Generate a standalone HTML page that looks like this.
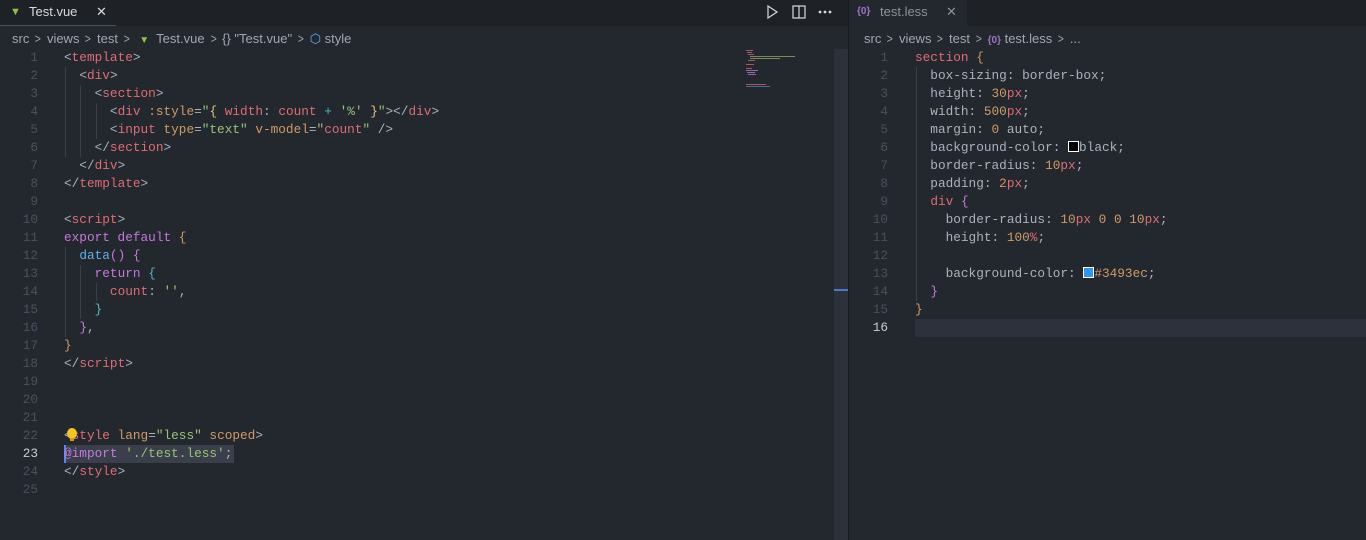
<!DOCTYPE html>
<html><head><meta charset="utf-8"><style>
*{margin:0;padding:0;box-sizing:border-box}
body{width:1366px;height:540px;background:#23272e;overflow:hidden;position:relative;font-family:"Liberation Sans",sans-serif}
.tabbar{position:absolute;top:0;height:26px;background:#1e2227}
.tab{position:absolute;top:0;height:26px;font-size:13px;line-height:24px;color:#d7dae0}
.bc{position:absolute;top:31px;font-size:13px;color:#a0a7b4;white-space:pre;line-height:16px}
.bc i{font-style:normal;display:inline-block;margin:0 5px;transform:scaleX(0.8)}
.code{position:absolute;font-family:"Liberation Mono",monospace;font-size:12.75px;line-height:18px;white-space:pre;color:#abb2bf}
.ln{position:absolute;font-family:"Liberation Mono",monospace;font-size:12.75px;line-height:18px;color:#495162;text-align:right;white-space:pre}
.r{color:#e06c75}.o{color:#d19a66}.g{color:#98c379}.p{color:#c678dd}.b{color:#61afef}.c{color:#56b6c2}.y{color:#e5c07b}.w{color:#abb2bf}
.guide{position:absolute;width:1px;background:#3b4048}
</style></head><body>
<div class="tabbar" style="left:0;width:848px"></div>
<div class="tabbar" style="left:849px;width:517px"></div>
<div class="tab" style="left:0;width:116px;border-bottom:1px solid #4b5263;background:#1e2227">
 <span style="position:absolute;left:10px;top:0;color:#8dc149;font-size:11px">▼</span>
 <span style="position:absolute;left:29px">Test.vue</span>
 <span style="position:absolute;left:96px;color:#d7dae0">✕</span>
</div>
<svg style="position:absolute;left:766px;top:4px" width="70" height="16" viewBox="0 0 70 16" fill="none" stroke="#d7dae0" stroke-width="1.2">
 <path d="M2 2 L11 8 L2 14 Z"/>
 <rect x="27" y="2" width="12" height="12"/><path d="M33 2 V14"/>
 <circle cx="54" cy="8" r=".8" fill="#d7dae0"/><circle cx="59" cy="8" r=".8" fill="#d7dae0"/><circle cx="64" cy="8" r=".8" fill="#d7dae0"/>
</svg>
<div class="tab" style="left:849px;width:118px;background:#23272e;color:#8b919c">
 <span style="position:absolute;left:8px;color:#a074c4;font-size:10px;font-weight:bold">{0}</span>
 <span style="position:absolute;left:31px">test.less</span>
 <span style="position:absolute;left:97px;color:#8b919c">✕</span>
</div>
<div class="bc" style="left:12px">src<i>&gt;</i>views<i>&gt;</i>test<i>&gt;</i> <span style="color:#8dc149;font-size:10px">▼</span>  Test.vue<i>&gt;</i>{} "Test.vue"<i>&gt;</i><span style="color:#61afef">⬡</span> style</div>
<div class="bc" style="left:864px">src<i>&gt;</i>views<i>&gt;</i>test<i>&gt;</i><span style="color:#a074c4;font-size:10px;font-weight:bold">{0}</span> test.less<i>&gt;</i>...</div>

<!-- left pane -->
<div class="ln" style="left:0;top:49px;width:38px">1
2
3
4
5
6
7
8
9
10
11
12
13
14
15
16
17
18
19
20
21
22
<span style="color:#c8ccd4">23</span>
24
25</div>
<div class="guide" style="left:65px;top:67px;height:90px"></div>
<div class="guide" style="left:80px;top:85px;height:72px"></div>
<div class="guide" style="left:96px;top:103px;height:36px"></div>
<div class="guide" style="left:65px;top:247px;height:90px"></div>
<div class="guide" style="left:80px;top:265px;height:54px"></div>
<div class="guide" style="left:96px;top:283px;height:18px"></div>
<div style="position:absolute;left:64px;top:445px;width:170px;height:18px;background:#3a3f4b"></div>
<div style="position:absolute;left:64px;top:445px;width:2px;height:18px;background:#528bff"></div>
<div class="code" style="left:64px;top:49px"><span class="w">&lt;</span><span class="r">template</span><span class="w">&gt;</span>
  <span class="w">&lt;</span><span class="r">div</span><span class="w">&gt;</span>
    <span class="w">&lt;</span><span class="r">section</span><span class="w">&gt;</span>
      <span class="w">&lt;</span><span class="r">div</span> <span class="o">:style</span>=<span class="g">"</span><span class="y">{</span> <span class="r">width</span>: <span class="r">count</span> <span class="c">+</span> <span class="g">'%'</span> <span class="y">}</span><span class="g">"</span>&gt;&lt;/<span class="r">div</span>&gt;
      &lt;<span class="r">input</span> <span class="o">type</span>=<span class="g">"text"</span> <span class="o">v-model</span>=<span class="g">"</span><span class="r">count</span><span class="g">"</span> /&gt;
    &lt;/<span class="r">section</span>&gt;
  &lt;/<span class="r">div</span>&gt;
&lt;/<span class="r">template</span>&gt;

&lt;<span class="r">script</span>&gt;
<span class="p">export default</span> <span class="o">{</span>
  <span class="b">data</span><span class="p">()</span> <span class="p">{</span>
    <span class="p">return</span> <span class="c">{</span>
      <span class="r">count</span>: <span class="g">''</span>,
    <span class="c">}</span>
  <span class="p">}</span>,
<span class="o">}</span>
&lt;/<span class="r">script</span>&gt;



&lt;<span class="r">style</span> <span class="o">lang</span>=<span class="g">"less"</span> <span class="o">scoped</span>&gt;
<span class="p">@import</span> <span class="g">'./test.less'</span>;
&lt;/<span class="r">style</span>&gt;
</div>
<div style="position:absolute;left:67px;top:428px;width:10px;height:11px;border-radius:50%;background:#f2c61f"></div>
<div style="position:absolute;left:70px;top:438px;width:4px;height:3px;background:#c9a00f"></div>

<!-- minimap -->
<svg style="position:absolute;left:745px;top:48px" width="60" height="50">
 <g fill="#a35a63"><rect x="1" y="2" width="7" height="1"/><rect x="2" y="4" width="5" height="1"/><rect x="3" y="6" width="6" height="1"/><rect x="3" y="12" width="7" height="1"/><rect x="1" y="16" width="8" height="1"/><rect x="1" y="20" width="6" height="1"/><rect x="1" y="36" width="20" height="1"/></g>
 <g fill="#7a8a5a"><rect x="5" y="8" width="45" height="1"/><rect x="5" y="10" width="30" height="1"/></g>
 <g fill="#8a6ab0"><rect x="1" y="22" width="12" height="1"/><rect x="2" y="24" width="8" height="1"/><rect x="3" y="26" width="8" height="1"/></g>
 <rect x="1" y="38" width="24" height="1" fill="#4a6a9a"/>
</svg>
<div style="position:absolute;left:834px;top:49px;width:14px;height:491px;background:#2c313a"></div>
<div style="position:absolute;left:834px;top:289px;width:14px;height:2px;background:#4d78cc"></div>
<div style="position:absolute;left:848px;top:0;width:1px;height:540px;background:#181a1f"></div>

<!-- right pane -->
<div class="ln" style="left:849px;top:49px;width:39px">1
2
3
4
5
6
7
8
9
10
11
12
13
14
15
<span style="color:#c8ccd4">16</span></div>
<div style="position:absolute;left:915px;top:319px;width:451px;height:18px;background:#2c313c"></div>
<div class="guide" style="left:916px;top:67px;height:234px"></div>
<div class="code" style="left:915px;top:49px"><span class="r">section</span> <span class="o">{</span>
  box-sizing: border-box;
  height: <span class="o">30</span><span class="r">px</span>;
  width: <span class="o">500</span><span class="r">px</span>;
  margin: <span class="o">0</span> auto;
  background-color: <span style="display:inline-block;width:11px;height:11px;border:1px solid #fff;background:#000;vertical-align:-1px"></span>black;
  border-radius: <span class="o">10</span><span class="r">px</span>;
  padding: <span class="o">2</span><span class="r">px</span>;
  <span class="r">div</span> <span class="p">{</span>
    border-radius: <span class="o">10</span><span class="r">px</span> <span class="o">0</span> <span class="o">0</span> <span class="o">10</span><span class="r">px</span>;
    height: <span class="o">100</span><span class="r">%</span>;

    background-color: <span style="display:inline-block;width:11px;height:11px;border:1px solid #fff;background:#3493ec;vertical-align:-1px"></span><span class="o">#3493ec</span>;
  <span class="p">}</span>
<span class="o">}</span>
</div>
</body></html>
